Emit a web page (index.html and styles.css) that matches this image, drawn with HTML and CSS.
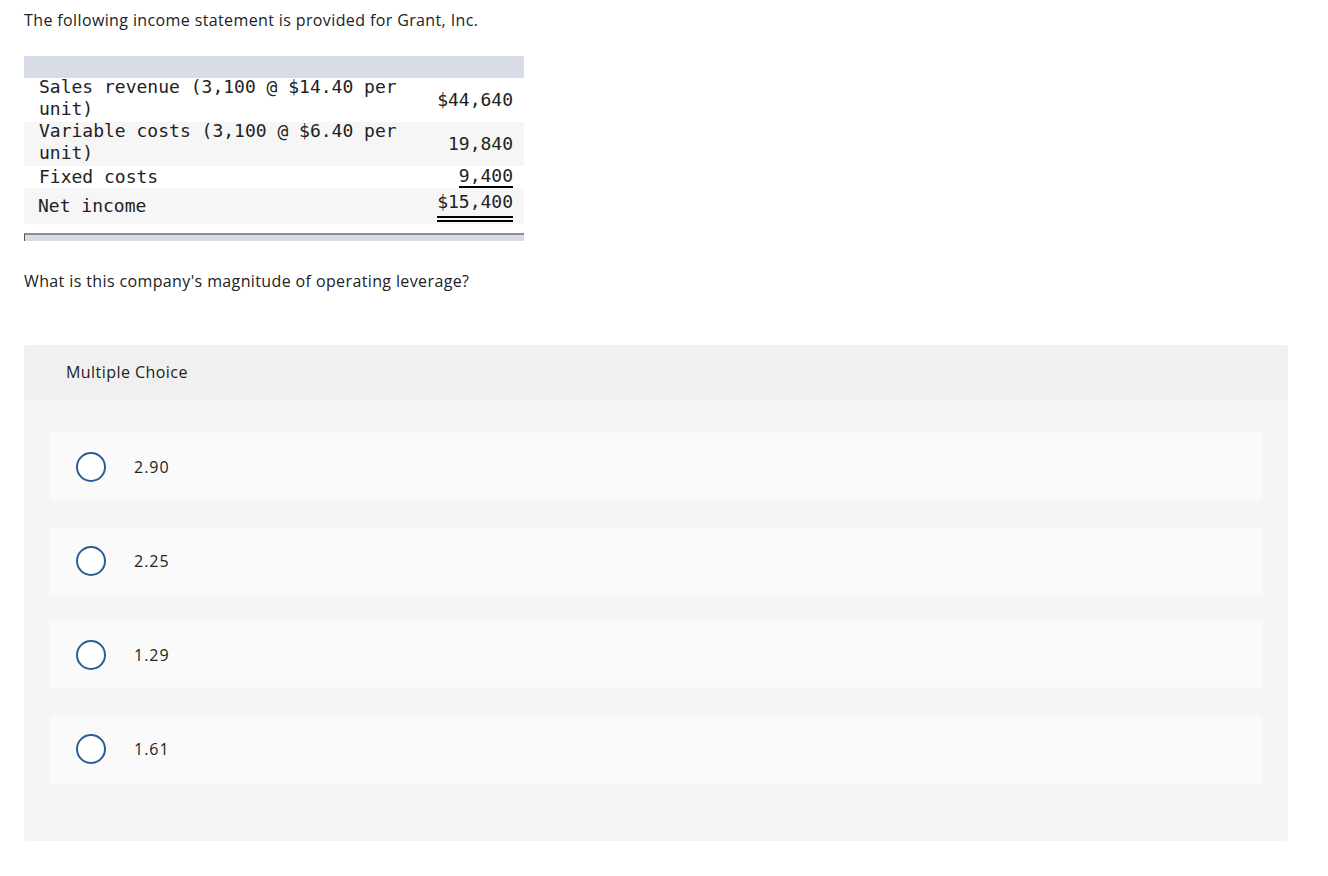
FILE: index.html
```html
<!DOCTYPE html>
<html>
<head>
<meta charset="utf-8">
<link rel="stylesheet" href="styles.css">
</head>
<body>
<div class="page">
  <p class="intro">The following income statement is provided for Grant, Inc.</p>
  <div class="stmt">
    <div class="stmt-head"></div>
    <div class="row r-white">
      <div class="label">Sales revenue (3,100 @ $14.40 per unit)</div>
      <div class="amt"><span>$44,640</span></div>
    </div>
    <div class="row r-gray">
      <div class="label">Variable costs (3,100 @ $6.40 per unit)</div>
      <div class="amt"><span>19,840</span></div>
    </div>
    <div class="row r-white r-fixed">
      <div class="label">Fixed costs</div>
      <div class="amt"><span class="single">9,400</span></div>
    </div>
    <div class="row r-gray r-total">
      <div class="label">Net income</div>
      <div class="amt"><span class="double">$15,400</span></div>
    </div>
    <div class="stmt-foot"></div>
  </div>
  <p class="question">What is this company's magnitude of operating leverage?</p>
  <div class="mc">
    <div class="mc-head">Multiple Choice</div>
    <div class="mc-body">
      <div class="opt"><span class="radio"></span><span class="opt-text">2.90</span></div>
      <div class="opt"><span class="radio"></span><span class="opt-text">2.25</span></div>
      <div class="opt"><span class="radio"></span><span class="opt-text">1.29</span></div>
      <div class="opt"><span class="radio"></span><span class="opt-text">1.61</span></div>
    </div>
  </div>
</div>
</body>
</html>
```
FILE: styles.css
```css
html, body { margin: 0; padding: 0; background: #fff; }
body { font-family: "Open Sans", "Liberation Sans", sans-serif; color: #222; letter-spacing: 0.38px; }
.page { padding: 0 40px 0 24px; }
.intro { margin: 0; padding-top: 10px; font-size: 16px; line-height: 20px; height: 46px; }
.stmt { width: 500px; font-family: "DejaVu Sans Mono", monospace; font-size: 18px; line-height: 22px; color: #222; letter-spacing: 0; }
.stmt-head { height: 22px; background: #d8dce6; }
.row { display: flex; align-items: center; }
.r-white { background: #fff; }
.r-gray { background: #f6f6f6; }
.label { width: 360px; padding-left: 15px; margin-top: -2px; margin-bottom: 2px; }
.amt { flex: 1; display: flex; flex-direction: column; align-items: flex-end; padding-right: 11px; }
.r-fixed { height: 22px; }
.r-fixed .label { margin: 0; }
.single { border-bottom: 2px solid #000; line-height: 20px; }
.r-total { height: 36px; align-items: flex-start; }
.r-total .label { padding-left: 14px; margin: 0; padding-top: 7px; }
.double { border-bottom: 6px double #000; line-height: 21px; padding-top: 3px; padding-bottom: 4px; }
.stmt-foot { margin-top: 9px; height: 6px; border-top: 2px solid #8a8e95; border-left: 1px solid #555; background: #d8dce6; }
.question { margin: 0; padding-top: 30px; font-size: 16px; line-height: 20px; height: 74px; }
.mc { width: 1264px; background: #f5f5f5; border-radius: 3px; overflow: hidden; }
.mc-head { height: 54px; background: #f0f0f0; display: flex; align-items: center; padding-left: 42px; font-size: 16px; letter-spacing: 0.45px; padding-bottom: 1px; box-sizing: border-box; }
.mc-body { padding: 34px 26px 58px 26px; display: flex; flex-direction: column; gap: 26px; }
.opt { height: 68px; background: #fafafa; border-radius: 2px; display: flex; align-items: center; padding-left: 26px; }
.radio { width: 26px; height: 26px; border: 2px solid #2c5d91; border-radius: 50%; background: #fff; box-sizing: content-box; }
.opt-text { margin-left: 28px; font-size: 16px; letter-spacing: 1px; }
```
